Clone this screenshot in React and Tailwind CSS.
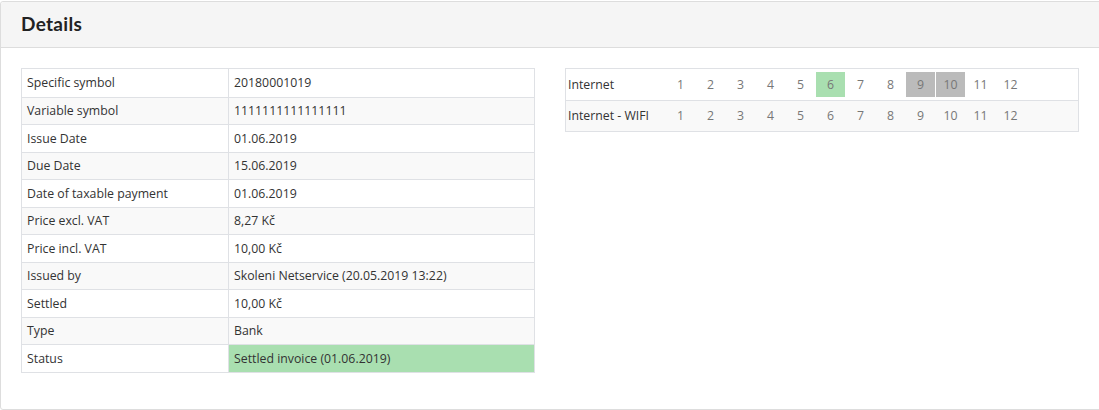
const details = [
  ["Specific symbol", "20180001019"],
  ["Variable symbol", "1111111111111111"],
  ["Issue Date", "01.06.2019"],
  ["Due Date", "15.06.2019"],
  ["Date of taxable payment", "01.06.2019"],
  ["Price excl. VAT", "8,27 Kč"],
  ["Price incl. VAT", "10,00 Kč"],
  ["Issued by", "Skoleni Netservice (20.05.2019 13:22)"],
  ["Settled", "10,00 Kč"],
  ["Type", "Bank"],
  ["Status", "Settled invoice (01.06.2019)", true],
]

const services = [
  { name: "Internet", paid: [6], pending: [9, 10] },
  { name: "Internet - WIFI", paid: [], pending: [] },
]

const months = [1, 2, 3, 4, 5, 6, 7, 8, 9, 10, 11, 12]

function DetailsTable() {
  return (
    <div className="w-[514px] border border-[#dfe1e5] text-[12.3px] text-[#333]">
      {details.map(([label, value, ok], i) => (
        <div
          key={label}
          className={`flex h-[27.55px] ${i > 0 ? "border-t border-[#dfe1e5]" : ""} ${i % 2 === 1 ? "bg-[#f9f9f9]" : "bg-white"}`}
        >
          <div className="w-[207px] shrink-0 border-r border-[#dfe1e5] px-[5px] pt-px flex items-center">{label}</div>
          <div className={`flex-1 px-[5px] pt-px flex items-center ${ok ? "bg-[#a9dfb0]" : ""}`}>{value}</div>
        </div>
      ))}
    </div>
  )
}

function ServicesTable() {
  return (
    <div className="w-[514px] border border-[#dfe1e5] text-[12.3px] text-[#333]">
      {services.map((s, i) => (
        <div
          key={s.name}
          className={`flex items-center h-[31px] ${i > 0 ? "border-t border-[#dfe1e5]" : ""} ${i % 2 === 1 ? "bg-[#f9f9f9]" : "bg-white"}`}
        >
          <div className="w-[100px] shrink-0 pl-[2px] pt-px">{s.name}</div>
          {months.map((m) => (
            <div
              key={m}
              className={`w-[29px] h-[25px] mr-px pt-px flex items-center justify-center text-[#777] ${
                s.paid.includes(m) ? "bg-[#a9dfb0]" : s.pending.includes(m) ? "bg-[#bbbbbb]" : ""
              }`}
            >
              {m}
            </div>
          ))}
        </div>
      ))}
    </div>
  )
}

export default function App() {
  return (
    <div className="bg-white w-[1099px] h-[410px] overflow-hidden pt-px" style={{ fontFamily: '"Open Sans", sans-serif' }}>
      <div className="w-[1110px] h-[409px] border border-[#dddddd] rounded-[3px] bg-white">
        <div className="h-[46px] bg-[#f5f5f5] border-b border-[#dddddd] flex items-center px-5 rounded-t-[3px]">
          <h1 className="text-[19px] text-[#222] tracking-[0.3px]" style={{ fontFamily: 'Lato, "Open Sans", sans-serif', fontWeight: 700 }}>
            Details
          </h1>
        </div>
        <div className="flex items-start gap-[30px] pt-5 pl-5">
          <DetailsTable />
          <ServicesTable />
        </div>
      </div>
    </div>
  )
}
